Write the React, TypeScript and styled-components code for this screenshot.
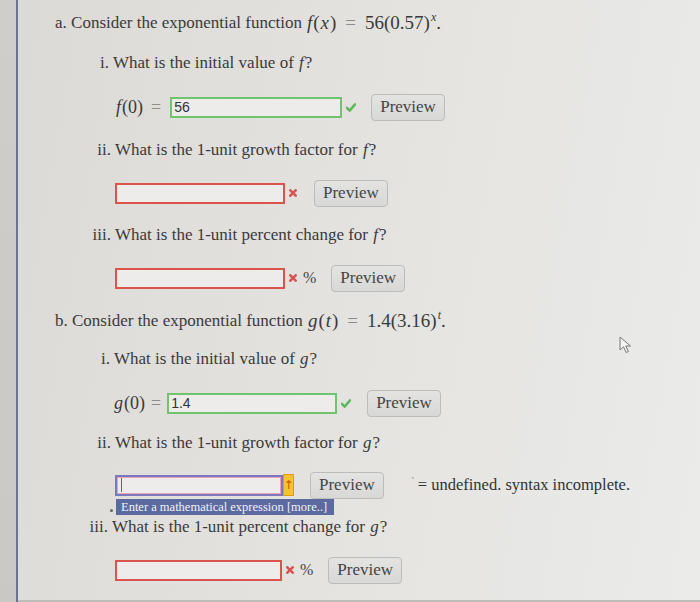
import React from "react";
import styled, { createGlobalStyle } from "styled-components";

const Global = createGlobalStyle`
  html, body { margin: 0; padding: 0; }
  body {
    width: 700px;
    height: 602px;
    overflow: hidden;
    background: #d3d2cf;
    font-family: "Liberation Serif", "Times New Roman", serif;
    color: #3a3a3a;
  }
`;

const Page = styled.div`
  display: flex;
  width: 700px;
  height: 602px;
`;

const Gutter = styled.div`
  width: 16px;
  flex: none;
  background: linear-gradient(180deg, #cfcecb 0%, #c9c8c4 100%);
  border-right: 2px solid #6d7194;
`;

const Sheet = styled.div`
  position: relative;
  flex: 1;
  display: flex;
  flex-direction: column;
  background: linear-gradient(100deg, #dbdad7 0%, #e3e2df 45%, #ebebe9 100%);
  border-bottom: 2px solid #bebdba;
`;

const Line = styled.div<{ $indent: number; $h: number }>`
  display: flex;
  align-items: center;
  height: ${(p) => p.$h}px;
  padding-left: ${(p) => p.$indent}px;
  font-size: 17px;
  white-space: nowrap;
`;

const Marker = styled.span`
  display: inline-block;
  width: 29px;
  text-align: right;
  margin-right: 4px;
`;

const Math = styled.span`
  font-size: 19px;
  margin-left: 4px;
`;

const Em = styled.span`
  font-style: italic;
  padding: 0 1px;
`;

const Sup = styled.span`
  display: inline-block;
  font-size: 12px;
  font-style: italic;
  position: relative;
  top: -8px;
  margin-left: 1px;
`;

const Eq = styled.span<{ $m?: number }>`
  color: #8c8c8c;
  margin: 0 ${(p) => p.$m ?? 8}px;
`;

const Label = styled.span<{ $gap: number }>`
  font-size: 18px;
  margin-right: ${(p) => p.$gap}px;
`;

const InputWrap = styled.div`
  position: relative;
  display: flex;
  align-items: center;
`;

const tones = {
  ok: "#72c36d",
  bad: "#d9534f",
  active: "#7b78c0",
};

const AnswerInput = styled.div<{ $w: number; $tone: keyof typeof tones }>`
  box-sizing: border-box;
  width: ${(p) => p.$w}px;
  height: 21px;
  border: 2px solid ${(p) => tones[p.$tone]};
  ${(p) => (p.$tone === "active" ? "box-shadow: inset 0 0 0 1px #e7a3b5;" : "")}
  background: #edecea;
  font-family: "Liberation Sans", Arial, sans-serif;
  font-size: 14px;
  color: #333;
  padding-left: 2px;
  display: flex;
  align-items: center;
`;

const Caret = styled.span`
  width: 1px;
  height: 14px;
  background: #666;
  margin-left: 2px;
`;

const HintTab = styled.div`
  box-sizing: border-box;
  width: 11px;
  height: 22px;
  background: #f4c430;
  border: 1px solid #d9a200;
  display: flex;
  align-items: center;
  justify-content: center;
  color: #c25a00;
  font-size: 12px;
  font-family: "DejaVu Sans", sans-serif;
`;

const Tooltip = styled.div`
  position: absolute;
  left: 1px;
  top: 25px;
  width: 218px;
  height: 16px;
  background: #5b6a9f;
  color: #f2f2f6;
  font-size: 12.5px;
  line-height: 16px;
  padding-left: 5px;
  box-sizing: border-box;
  white-space: nowrap;

  &::before {
    content: "";
    position: absolute;
    left: -6px;
    top: 10px;
    width: 3px;
    height: 3px;
    border-radius: 50%;
    background: #666;
  }
`;

const Mark = styled.span<{ $gap: number }>`
  display: inline-flex;
  margin-left: ${(p) => p.$gap}px;
`;

const Percent = styled.span`
  font-size: 16px;
  margin-left: 6px;
  color: #444;
`;

const PreviewButton = styled.button<{ $gap: number }>`
  margin-left: ${(p) => p.$gap}px;
  height: 27px;
  padding: 0 8px;
  border: 1px solid #bcbcba;
  border-radius: 4px;
  background: linear-gradient(180deg, #e3e3e1 0%, #d8d8d6 100%);
  font-family: "Liberation Serif", "Times New Roman", serif;
  font-size: 17px;
  color: #444;
`;

const Message = styled.span`
  margin-left: 27px;
  font-size: 16.5px;
  color: #333;
`;

const Tick = styled.span`
  color: #999;
  font-size: 12px;
  margin-right: 3px;
  position: relative;
  top: -4px;
`;

const Pointer = styled.svg`
  position: absolute;
  left: 601px;
  top: 336px;
`;

const Check = () => (
  <svg width="10" height="9" viewBox="0 0 11 10">
    <path d="M1 5.5 L4 8.5 L10 1.5" fill="none" stroke="#5cb85c" strokeWidth="2.8" strokeLinecap="round" strokeLinejoin="round" />
  </svg>
);

const Cross = () => (
  <svg width="8" height="8" viewBox="0 0 9 9">
    <path d="M1.5 1.5 L7.5 7.5 M7.5 1.5 L1.5 7.5" fill="none" stroke="#d9534f" strokeWidth="2.8" strokeLinecap="square" />
  </svg>
);

export default function App() {
  return (
    <>
      <Global />
      <Page>
        <Gutter />
        <Sheet>
          <Line $indent={37} $h={46}>
            a. Consider the exponential function
            <Math>
              <Em>f</Em>(<Em>x</Em>)<Eq $m={9}>=</Eq>56(0.57)<Sup>x</Sup>.
            </Math>
          </Line>
          <Line $indent={62} $h={34}>
            <Marker>i.</Marker>What is the initial value of&nbsp;<Em>f</Em>?
          </Line>
          <Line $indent={97} $h={54}>
            <Label $gap={1}>
              <Em>f</Em>(0)<Eq>=</Eq>
            </Label>
            <AnswerInput $w={172} $tone="ok">56</AnswerInput>
            <Mark $gap={4}><Check /></Mark>
            <PreviewButton $gap={15}>Preview</PreviewButton>
          </Line>
          <Line $indent={64} $h={32}>
            <Marker>ii.</Marker>What is the 1-unit growth factor for&nbsp;<Em>f</Em>?
          </Line>
          <Line $indent={97} $h={54}>
            <AnswerInput $w={170} $tone="bad" />
            <Mark $gap={4}><Cross /></Mark>
            <PreviewButton $gap={17}>Preview</PreviewButton>
          </Line>
          <Line $indent={64} $h={30}>
            <Marker>iii.</Marker>What is the 1-unit percent change for&nbsp;<Em>f</Em>?
          </Line>
          <Line $indent={97} $h={56}>
            <AnswerInput $w={170} $tone="bad" />
            <Mark $gap={4}><Cross /></Mark>
            <Percent>%</Percent>
            <PreviewButton $gap={15}>Preview</PreviewButton>
          </Line>
          <Line $indent={37} $h={30}>
            b. Consider the exponential function
            <Math>
              <Em>g</Em>(<Em>t</Em>)<Eq $m={9}>=</Eq>1.4(3.16)<Sup>t</Sup>.
            </Math>
          </Line>
          <Line $indent={63} $h={46}>
            <Marker>i.</Marker>What is the initial value of&nbsp;<Em>g</Em>?
          </Line>
          <Line $indent={95} $h={42}>
            <Label $gap={0}>
              <Em>g</Em>(0)<Eq $m={6}>=</Eq>
            </Label>
            <AnswerInput $w={170} $tone="ok">1.4</AnswerInput>
            <Mark $gap={4}><Check /></Mark>
            <PreviewButton $gap={16}>Preview</PreviewButton>
          </Line>
          <Line $indent={64} $h={38}>
            <Marker>ii.</Marker>What is the 1-unit growth factor for&nbsp;<Em>g</Em>?
          </Line>
          <Line $indent={97} $h={46}>
            <InputWrap>
              <AnswerInput $w={168} $tone="active">
                <Caret />
              </AnswerInput>
              <HintTab>↑</HintTab>
              <Tooltip>Enter a mathematical expression [more..]</Tooltip>
            </InputWrap>
            <PreviewButton $gap={16}>Preview</PreviewButton>
            <Message>
              <Tick>`</Tick>= undefined. syntax incomplete.
            </Message>
          </Line>
          <Line $indent={61} $h={38}>
            <Marker>iii.</Marker>What is the 1-unit percent change for&nbsp;<Em>g</Em>?
          </Line>
          <Line $indent={97} $h={48}>
            <AnswerInput $w={167} $tone="bad" />
            <Mark $gap={4}><Cross /></Mark>
            <Percent>%</Percent>
            <PreviewButton $gap={15}>Preview</PreviewButton>
          </Line>
          <Pointer width="14" height="18" viewBox="0 0 14 18">
            <path d="M1 1 L1 14 L4.5 10.8 L7.2 16.5 L9.4 15.5 L6.8 10 L11.5 10 Z" fill="#f4f4f2" stroke="#777" strokeWidth="1" strokeLinejoin="round" />
          </Pointer>
        </Sheet>
      </Page>
    </>
  );
}
